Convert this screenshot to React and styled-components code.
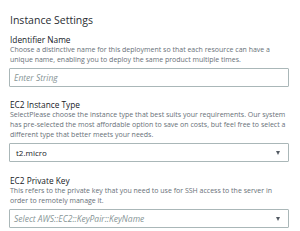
import React from "react";
import styled, { createGlobalStyle } from "styled-components";

const Global = createGlobalStyle`
  html, body { margin: 0; padding: 0; background: #ffffff; }
  body { font-family: "Open Sans", "Noto Sans", sans-serif; }
`;

const Panel = styled.div`
  width: 280px;
  margin-left: 9px;
  padding-top: 12px;
  display: flex;
  flex-direction: column;
`;

const Title = styled.h2`
  margin: 0 0 6px 1px;
  font-size: 10.5px;
  line-height: 16px;
  font-weight: 400;
  color: #2a2e33;
`;

const Field = styled.div`
  display: flex;
  flex-direction: column;
  margin-bottom: ${(p) => p.$gap || 12}px;
`;

const Label = styled.div`
  margin-left: 1px;
  font-size: 8.3px;
  line-height: 11px;
  font-weight: 400;
  color: #16191f;
`;

const Desc = styled.div`
  margin-left: 1px;
  font-size: 7px;
  line-height: 10px;
  color: #687078;
  margin-bottom: 3px;
`;

const Box = styled.div`
  box-sizing: border-box;
  height: 19px;
  border: 1px solid #aab7b8;
  border-radius: 1px;
  display: flex;
  align-items: center;
  justify-content: space-between;
  padding: ${(p) => (p.$placeholder ? "0 8px 0 4px" : "0 8px 0 6px")};
  font-size: ${(p) => (p.$placeholder ? "8.5px" : "8px")};
  color: ${(p) => (p.$placeholder ? "#879596" : "#16191f")};
  font-style: ${(p) => (p.$placeholder ? "italic" : "normal")};
`;

const Arrow = styled.span`
  width: 0;
  height: 0;
  border-left: 2.5px solid transparent;
  border-right: 2.5px solid transparent;
  border-top: 4px solid #545b64;
`;

export default function App() {
  return (
    <>
      <Global />
      <Panel>
        <Title>Instance Settings</Title>
        <Field>
          <Label>Identifier Name</Label>
          <Desc>
            Choose a distinctive name for this deployment so that each resource can have a
            unique name, enabling you to deploy the same product multiple times.
          </Desc>
          <Box $placeholder>Enter String</Box>
        </Field>
        <Field $gap={13}>
          <Label>EC2 Instance Type</Label>
          <Desc>
            SelectPlease choose the instance type that best suits your requirements. Our system
            has pre-selected the most affordable option to save on costs, but feel free to select a
            different type that better meets your needs.
          </Desc>
          <Box>
            t2.micro
            <Arrow />
          </Box>
        </Field>
        <Field>
          <Label>EC2 Private Key</Label>
          <Desc>
            This refers to the private key that you need to use for SSH access to the server in
            order to remotely manage it.
          </Desc>
          <Box $placeholder>
            Select AWS::EC2::KeyPair::KeyName
            <Arrow />
          </Box>
        </Field>
      </Panel>
    </>
  );
}
